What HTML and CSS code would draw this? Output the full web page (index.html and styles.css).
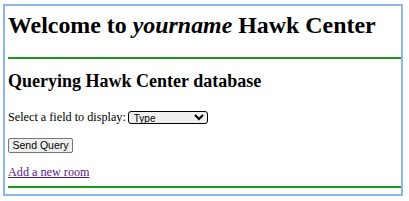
FILE: index.html
```html
<!DOCTYPE html>
<html lang="en">
<head>
  <meta charset="UTF-8">
  <title>Hawk Center</title>
  <link rel="stylesheet" href="styles.css">
</head>
<body>
  <div class="frame">
    <h1>Welcome to <em>yourname</em> Hawk Center</h1>
    <hr>
    <h2>Querying Hawk Center database</h2>

    <form class="query-form">
      <div class="field-row">
        <label for="field">Select a field to display:</label>
        <select id="field" name="field">
          <option>Type</option>
          <option>Room</option>
          <option>Capacity</option>
        </select>
      </div>
      <div class="actions">
        <button type="button">Send Query</button>
      </div>
    </form>

    <a href="#" class="add-link">Add a new room</a>
    <hr>
  </div>
</body>
</html>
```

FILE: styles.css
```css
body {
  margin: 0;
  font-family: "Liberation Serif", "Times New Roman", serif;
  font-size: 12.2px;
  line-height: 14px;
  color: #000;
  background-color: #fff;
}

.frame {
  width: 400px;
  margin: 4px 0 0 3px;
  padding: 0 0 6px 3px;
  border: 2px solid #8db6e2;
  box-sizing: border-box;
}

h1 {
  font-size: 23.9px;
  line-height: 27px;
  margin: 6px 0 18px;
  white-space: nowrap;
}

h2 {
  font-size: 18px;
  line-height: 21px;
  margin: 12px 0 18px;
}

hr {
  border: 0;
  height: 2px;
  margin: 0;
  background-color: #189a18;
}

.query-form {
  margin: 0;
}

.field-row {
  display: flex;
  align-items: center;
  gap: 2px;
  height: 14px;
}

select {
  width: 80px;
  height: 13px;
  padding: 0 0 0 1px;
  font-family: "Liberation Sans", Arial, sans-serif;
  font-size: 10px;
  line-height: 11px;
  border: 1px solid #000;
  border-radius: 3px;
}

.actions {
  margin: 14px 0 12px;
  height: 15px;
}

button {
  display: block;
  width: 65px;
  height: 15px;
  padding: 0;
  font-family: "Liberation Sans", Arial, sans-serif;
  font-size: 10.5px;
  line-height: 13px;
  background-color: #efefef;
  border: 1px solid #767676;
  border-radius: 2px;
}

.add-link {
  display: block;
  margin-bottom: 7px;
  color: #551a8b;
}
```
